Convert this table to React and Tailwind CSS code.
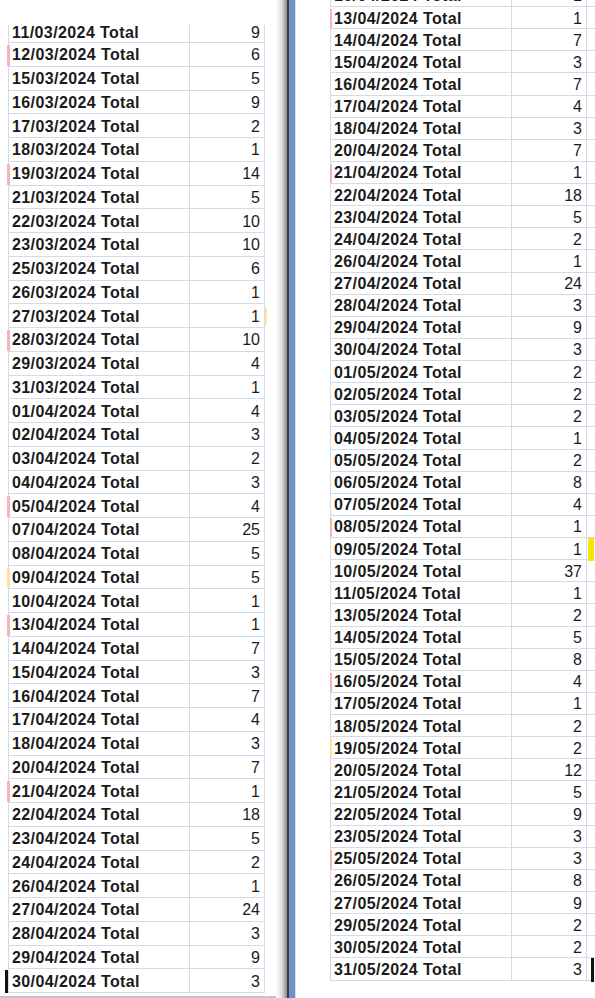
import React from 'react';

// --- DATA ---
const leftRows = [
  ['11/03/2024', 9], ['12/03/2024', 6, 'pink'], ['15/03/2024', 5], ['16/03/2024', 9],
  ['17/03/2024', 2], ['18/03/2024', 1], ['19/03/2024', 14, 'pink'], ['21/03/2024', 5],
  ['22/03/2024', 10], ['23/03/2024', 10], ['25/03/2024', 6], ['26/03/2024', 1],
  ['27/03/2024', 1, null, 'paleRight'], ['28/03/2024', 10, 'pink'], ['29/03/2024', 4], ['31/03/2024', 1],
  ['01/04/2024', 4], ['02/04/2024', 3], ['03/04/2024', 2], ['04/04/2024', 3],
  ['05/04/2024', 4, 'pink'], ['07/04/2024', 25], ['08/04/2024', 5], ['09/04/2024', 5, 'yellow'],
  ['10/04/2024', 1], ['13/04/2024', 1, 'pink'], ['14/04/2024', 7], ['15/04/2024', 3],
  ['16/04/2024', 7], ['17/04/2024', 4], ['18/04/2024', 3], ['20/04/2024', 7],
  ['21/04/2024', 1, 'pink'], ['22/04/2024', 18], ['23/04/2024', 5], ['24/04/2024', 2],
  ['26/04/2024', 1], ['27/04/2024', 24], ['28/04/2024', 3], ['29/04/2024', 9],
  ['30/04/2024', 3, 'black'],
];

const rightRows = [
  ['10/04/2024', 1], ['13/04/2024', 1, 'pink'], ['14/04/2024', 7], ['15/04/2024', 3],
  ['16/04/2024', 7], ['17/04/2024', 4], ['18/04/2024', 3], ['20/04/2024', 7],
  ['21/04/2024', 1, 'pink'], ['22/04/2024', 18], ['23/04/2024', 5], ['24/04/2024', 2],
  ['26/04/2024', 1], ['27/04/2024', 24], ['28/04/2024', 3], ['29/04/2024', 9],
  ['30/04/2024', 3, 'black'], ['01/05/2024', 2], ['02/05/2024', 2], ['03/05/2024', 2],
  ['04/05/2024', 1], ['05/05/2024', 2], ['06/05/2024', 8], ['07/05/2024', 4],
  ['08/05/2024', 1, 'pink'], ['09/05/2024', 1, null, 'yellowBright'], ['10/05/2024', 37], ['11/05/2024', 1],
  ['13/05/2024', 2], ['14/05/2024', 5], ['15/05/2024', 8], ['16/05/2024', 4, 'pink'],
  ['17/05/2024', 1], ['18/05/2024', 2], ['19/05/2024', 2, 'yellow'], ['20/05/2024', 12],
  ['21/05/2024', 5, 'black'], ['22/05/2024', 9], ['23/05/2024', 3], ['25/05/2024', 3, 'pink'],
  ['26/05/2024', 8], ['27/05/2024', 9], ['29/05/2024', 2], ['30/05/2024', 2],
  ['31/05/2024', 3, null, 'blackRight'],
];

const font = "font-['Liberation_Sans',Arial,sans-serif]";

// left-edge marks that sit over the cell border
const LeftMark = ({ kind }) => {
  if (kind === 'pink') return <span className="absolute -left-[2px] top-[2px] bottom-0 w-[3px] bg-[#f3b3c0]" />;
  if (kind === 'yellow') return <span className="absolute -left-[2px] top-[2px] bottom-0 w-[3px] bg-[#fde49a]" />;
  if (kind === 'black') return <span className="absolute -left-[4px] top-[1px] -bottom-[1px] w-[3px] bg-[#111]" />;
  return null;
};

const Row = ({ date, value, mark, side, height, extra }) => (
  <div className={`flex ${height} border-b border-[#d3dbe9]`}>
    <div className="relative w-[181px] flex items-center border-l border-[#d3dbe9] pl-[3px] pt-[2px]">
      <LeftMark kind={mark} />
      <span className="font-bold text-[16px] tracking-[0.4px] text-[#1b1b1b] whitespace-nowrap">{date} Total</span>
    </div>
    <div className="relative w-[76px] flex items-center justify-end border-l border-r border-[#d3dbe9] pr-[4px] pt-[2px]">
      <span className="text-[16px] text-[#1b1b1b]">{value}</span>
      {side === 'paleRight' && <span className="absolute -right-[3px] top-[4px] bottom-[2px] w-[2px] bg-[#fbe9a4]" />}
    </div>
    {extra && (
      <div className="relative flex-1">
        {side === 'yellowBright' && <span className="absolute left-[1px] top-0 -bottom-[2px] w-[6px] bg-[#f6e600]" />}
        {side === 'blackRight' && <span className="absolute left-[4px] top-0 -bottom-[2px] w-[3px] bg-[#111]" />}
      </div>
    )}
  </div>
);

const App = () => {
  return (
    <div className={`flex w-[595px] h-[998px] overflow-hidden bg-white ${font}`}>
      {/* LEFT SCREENSHOT */}
      <div className="w-[276px] flex flex-col shrink-0">
        <div className="h-[25px]" />
        <div className="h-[968px] overflow-hidden pl-[8px]">
          <div className="-mt-[4px] w-[257px]">
            {leftRows.map(([d, v, m, s], i) => (
              <Row key={d} date={d} value={v} mark={m} side={s} height={i === 0 ? 'h-[22px]' : 'h-[23.75px]'} />
            ))}
          </div>
        </div>
        <div className="h-[3px]" />
        <div className="h-[2px] bg-[#c4c4c4]" />
      </div>

      {/* WINDOW EDGE */}
      <div className="w-[11px] shrink-0 bg-gradient-to-r from-white via-[#e2e2e2] to-[#8d8d8d]" />
      <div className="w-[2px] shrink-0 bg-[#3c3c3c]" />
      <div className="w-[6px] shrink-0 bg-[#6f92c8]" />
      <div className="w-[1px] shrink-0 bg-[#d2ddef]" />

      {/* RIGHT SCREENSHOT */}
      <div className="flex-1 pl-[34px]">
        <div className="h-[982px] overflow-hidden">
          <div className="-mt-[15.13px]">
            {rightRows.map(([d, v, m, s]) => (
              <Row key={d} date={d} value={v} mark={m} side={s} height="h-[22.13px]" extra />
            ))}
          </div>
        </div>
      </div>
    </div>
  );
};

export default App;
